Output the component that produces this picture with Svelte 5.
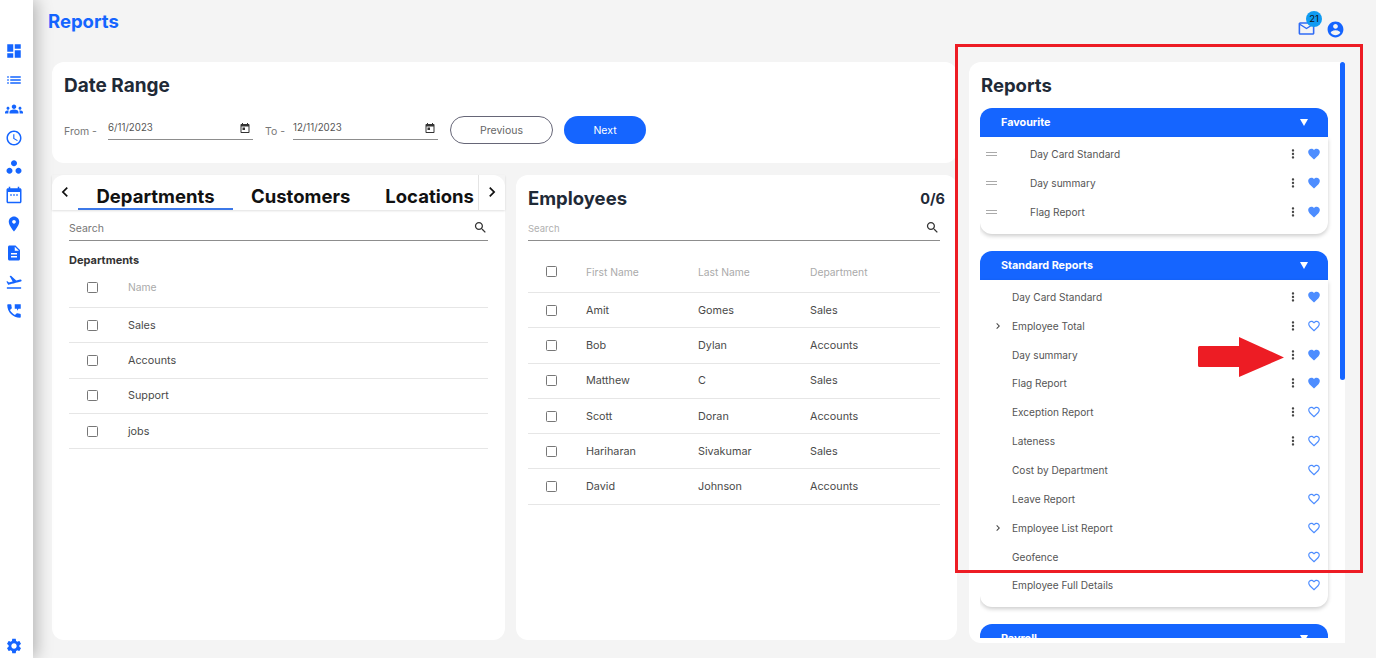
<script>
  const navIcons = [
    "M3 13h8V3H3v10zm0 8h8v-6H3v6zm10 0h8V11h-8v10zm0-18v6h8V3h-8z",
    "M3 13h2v-2H3v2zm0 4h2v-2H3v2zm0-8h2V7H3v2zm4 4h14v-2H7v2zm0 4h14v-2H7v2zM7 7v2h14V7H7z",
    "M12 12.75c1.63 0 3.07.39 4.24.9 1.08.48 1.76 1.56 1.76 2.73V18H6v-1.61c0-1.18.68-2.26 1.76-2.73 1.17-.52 2.61-.91 4.24-.91zM4 13c1.1 0 2-.9 2-2s-.9-2-2-2-2 .9-2 2 .9 2 2 2zm1.13 1.1c-.37-.06-.74-.1-1.13-.1-.99 0-1.93.21-2.78.58C.48 14.9 0 15.62 0 16.43V18h4.5v-1.61c0-.83.23-1.61.63-2.29zM20 13c1.1 0 2-.9 2-2s-.9-2-2-2-2 .9-2 2 .9 2 2 2zm4 3.43c0-.81-.48-1.53-1.22-1.85-.85-.37-1.79-.58-2.78-.58-.39 0-.76.04-1.13.1.4.68.63 1.46.63 2.29V18H24v-1.57zM12 6c1.66 0 3 1.34 3 3s-1.34 3-3 3-3-1.34-3-3 1.34-3 3-3z",
    "M11.99 2C6.47 2 2 6.48 2 12s4.47 10 9.99 10C17.52 22 22 17.52 22 12S17.52 2 11.99 2zM12 20c-4.42 0-8-3.58-8-8s3.58-8 8-8 8 3.58 8 8-3.58 8-8 8zm.5-13H11v6l5.25 3.15.75-1.23-4.5-2.67z",
    "M6 13c-2.2 0-4 1.8-4 4s1.8 4 4 4 4-1.8 4-4-1.8-4-4-4zm6-10C9.8 3 8 4.8 8 7s1.8 4 4 4 4-1.8 4-4-1.8-4-4-4zm6 10c-2.2 0-4 1.8-4 4s1.8 4 4 4 4-1.8 4-4-1.8-4-4-4z",
    "M20 3h-1V1h-2v2H7V1H5v2H4c-1.1 0-2 .9-2 2v16c0 1.1.9 2 2 2h16c1.1 0 2-.9 2-2V5c0-1.1-.9-2-2-2zm0 18H4V8h16v13zM7 11h2v2H7zm4 0h2v2h-2zm4 0h2v2h-2z",
    "M12 2C8.13 2 5 5.13 5 9c0 5.25 7 13 7 13s7-7.75 7-13c0-3.87-3.13-7-7-7zm0 9.5c-1.38 0-2.5-1.12-2.5-2.5s1.12-2.5 2.5-2.5 2.5 1.12 2.5 2.5-1.12 2.5-2.5 2.5z",
    "M14 2H6c-1.1 0-1.99.9-1.99 2L4 20c0 1.1.89 2 1.99 2H18c1.1 0 2-.9 2-2V8l-6-6zm2 16H8v-2h8v2zm0-4H8v-2h8v2zm-3-5V3.5L18.5 9H13z",
    "M2.5 19h19v2h-19v-2zm19.57-9.36c-.21-.8-1.04-1.28-1.84-1.06L14.92 10l-6.9-6.43-1.93.51 4.14 7.17-4.97 1.33-1.97-1.54-1.45.39 2.59 4.49s7.12-1.9 16.57-4.43c.81-.23 1.28-1.05 1.07-1.85z",
    "M20 15.5c-1.25 0-2.45-.2-3.57-.57-.35-.11-.74-.03-1.02.24l-2.2 2.2c-2.83-1.44-5.15-3.75-6.59-6.59l2.2-2.21c.28-.27.36-.66.25-1.01C8.7 6.45 8.5 5.25 8.5 4c0-.55-.45-1-1-1H4c-.55 0-1 .45-1 1 0 9.39 7.61 17 17 17 .55 0 1-.45 1-1v-3.5c0-.55-.45-1-1-1zM13 3h8v6h-3l-2 2.500V9h-3z"
  ];
  const gear = "M19.14 12.94c.04-.3.06-.61.06-.94 0-.32-.02-.64-.07-.94l2.03-1.58c.18-.14.23-.41.12-.61l-1.92-3.32c-.12-.22-.37-.29-.59-.22l-2.39.96c-.5-.38-1.03-.7-1.62-.94l-.36-2.54c-.04-.24-.24-.41-.48-.41h-3.84c-.24 0-.43.17-.47.41l-.36 2.54c-.59.24-1.13.57-1.62.94l-2.39-.96c-.22-.08-.47 0-.59.22L2.74 8.87c-.12.21-.08.47.12.61l2.03 1.58c-.05.3-.09.63-.09.94s.02.64.07.94l-2.03 1.58c-.18.14-.23.41-.12.61l1.92 3.32c.12.22.37.29.59.22l2.39-.96c.5.38 1.03.7 1.62.94l.36 2.54c.05.24.24.41.48.41h3.84c.24 0 .44-.17.47-.41l.36-2.54c.59-.24 1.13-.56 1.62-.94l2.39.96c.22.08.47 0 .59-.22l1.92-3.32c.12-.22.07-.47-.12-.61l-2.01-1.58zM12 15.6c-1.98 0-3.6-1.62-3.6-3.6s1.62-3.6 3.6-3.6 3.6 1.62 3.6 3.6-1.62 3.6-3.6 3.6z";
  const heartFull = "M12 21.35l-1.45-1.32C5.4 15.36 2 12.28 2 8.5 2 5.42 4.42 3 7.5 3c1.74 0 3.41.81 4.5 2.09C13.09 3.81 14.76 3 16.5 3 19.58 3 22 5.42 22 8.5c0 3.78-3.4 6.86-8.55 11.54L12 21.35z";
  const heartLine = "M16.5 3c-1.74 0-3.41.81-4.5 2.09C10.91 3.81 9.24 3 7.5 3 4.42 3 2 5.42 2 8.5c0 3.78 3.4 6.86 8.55 11.54L12 21.35l1.45-1.32C18.6 15.36 22 12.28 22 8.5 22 5.42 19.58 3 16.5 3zm-4.4 15.55l-.1.1-.1-.1C7.14 14.24 4 11.39 4 8.5 4 6.5 5.5 5 7.5 5c1.54 0 3.04.99 3.57 2.36h1.87C13.46 5.99 14.96 5 16.5 5c2 0 3.5 1.5 3.5 3.5 0 2.89-3.14 5.74-7.9 10.05z";
  const searchIcon = "M15.5 14h-.79l-.28-.27C15.41 12.59 16 11.11 16 9.5 16 5.91 13.09 3 9.5 3S3 5.91 3 9.5 5.91 16 9.5 16c1.61 0 3.09-.59 4.23-1.57l.27.28v.79l5 4.99L20.49 19l-4.99-5zm-6 0C7.01 14 5 11.99 5 9.5S7.01 5 9.5 5 14 7.01 14 9.5 11.99 14 9.5 14z";
  const calIcon = "M19 4h-1V2h-2v2H8V2H6v2H5c-1.1 0-2 .9-2 2v14c0 1.1.9 2 2 2h14c1.1 0 2-.9 2-2V6c0-1.1-.9-2-2-2zm0 16H5V9h14v11zM7 11h5v5H7z";
  const dotsIcon = "M12 8c1.1 0 2-.9 2-2s-.9-2-2-2-2 .9-2 2 .9 2 2 2zm0 2c-1.1 0-2 .9-2 2s.9 2 2 2 2-.9 2-2-.9-2-2-2zm0 6c-1.1 0-2 .9-2 2s.9 2 2 2 2-.9 2-2-.9-2-2-2z";
  const chevRight = "M10 6L8.59 7.41 13.17 12l-4.58 4.59L10 18l6-6z";

  const departments = ["Sales", "Accounts", "Support", "jobs"];
  const employees = [
    ["Amit", "Gomes", "Sales"],
    ["Bob", "Dylan", "Accounts"],
    ["Matthew", "C", "Sales"],
    ["Scott", "Doran", "Accounts"],
    ["Hariharan", "Sivakumar", "Sales"],
    ["David", "Johnson", "Accounts"]
  ];
  const favourites = ["Day Card Standard", "Day summary", "Flag Report"];
  const standard = [
    { name: "Day Card Standard", menu: true, fav: true },
    { name: "Employee Total", menu: true, sub: true },
    { name: "Day summary", menu: true, fav: true },
    { name: "Flag Report", menu: true, fav: true },
    { name: "Exception Report", menu: true },
    { name: "Lateness", menu: true },
    { name: "Cost by Department" },
    { name: "Leave Report" },
    { name: "Employee List Report", sub: true },
    { name: "Geofence" },
    { name: "Employee Full Details" }
  ];
</script>

<div class="page">
  <nav class="sidebar">
    <div class="nav-top">
      {#each navIcons as d}
        <svg class="nav-icon" viewBox="0 0 24 24"><path d={d} /></svg>
      {/each}
    </div>
    <svg class="nav-icon" viewBox="0 0 24 24"><path d={gear} /></svg>
  </nav>

  <main class="main">
    <header class="header">
      <h1>Reports</h1>
      <div class="header-icons">
        <div class="mail">
          <svg viewBox="0 0 24 24"><path d="M20 4H4c-1.1 0-2 .9-2 2v12c0 1.1.9 2 2 2h16c1.1 0 2-.9 2-2V6c0-1.1-.9-2-2-2zm0 14H4V8l8 5 8-5v10zm-8-7L4 6h16l-8 5z" /></svg>
          <span class="badge">21</span>
        </div>
        <svg class="user" viewBox="0 0 24 24"><path d="M12 2C6.48 2 2 6.48 2 12s4.48 10 10 10 10-4.48 10-10S17.52 2 12 2zm0 3c1.66 0 3 1.34 3 3s-1.34 3-3 3-3-1.34-3-3 1.34-3 3-3zm0 14.2c-2.5 0-4.71-1.28-6-3.22.03-1.99 4-3.08 6-3.08 1.99 0 5.97 1.09 6 3.08-1.29 1.94-3.5 3.22-6 3.22z" /></svg>
      </div>
    </header>

    <div class="content">
      <div class="left">
        <section class="card date-card">
          <h2>Date Range</h2>
          <div class="date-row">
            <span class="date-label">From -</span>
            <div class="date-field">
              <span>6/11/2023</span>
              <svg viewBox="0 0 24 24"><path d={calIcon} /></svg>
            </div>
            <span class="date-label to">To -</span>
            <div class="date-field">
              <span>12/11/2023</span>
              <svg viewBox="0 0 24 24"><path d={calIcon} /></svg>
            </div>
            <button class="btn prev">Previous</button>
            <button class="btn next">Next</button>
          </div>
        </section>

        <div class="lists">
          <section class="card dept-card">
            <div class="tabs">
              <svg class="chev back" viewBox="0 0 24 24"><path d="M15.41 7.41L14 6l-6 6 6 6 1.41-1.41L10.83 12z" /></svg>
              <div class="tab active">Departments</div>
              <div class="tab">Customers</div>
              <div class="tab last">Locations</div>
              <div class="tab-next">
                <svg class="chev" viewBox="0 0 24 24"><path d={chevRight} /></svg>
              </div>
            </div>
            <div class="dept-body">
              <div class="search">
                <span>Search</span>
                <svg viewBox="0 0 24 24"><path d={searchIcon} /></svg>
              </div>
              <h3>Departments</h3>
              <div class="row dept-head">
                <i class="check"></i>
                <span class="muted">Name</span>
              </div>
              {#each departments as dept}
                <div class="row">
                  <i class="check"></i>
                  <span>{dept}</span>
                </div>
              {/each}
            </div>
          </section>

          <section class="card emp-card">
            <div class="emp-title">
              <h2>Employees</h2>
              <b>0/6</b>
            </div>
            <div class="search light">
              <span>Search</span>
              <svg viewBox="0 0 24 24"><path d={searchIcon} /></svg>
            </div>
            <div class="emp-row emp-head">
              <i class="check"></i>
              <span>First Name</span>
              <span>Last Name</span>
              <span>Department</span>
            </div>
            {#each employees as emp}
              <div class="emp-row">
                <i class="check"></i>
                {#each emp as cell}
                  <span>{cell}</span>
                {/each}
              </div>
            {/each}
          </section>
        </div>
      </div>

      <aside class="card reports">
        <div class="reports-scroll">
          <h2>Reports</h2>

          <div class="group">
            <div class="group-head">
              <span>Favourite</span>
              <i class="caret"></i>
            </div>
            <div class="group-body">
              {#each favourites as name}
                <div class="report">
                  <i class="drag"></i>
                  <span class="report-name">{name}</span>
                  <svg class="dots" viewBox="0 0 24 24"><path d={dotsIcon} /></svg>
                  <svg class="heart" viewBox="0 0 24 24"><path d={heartFull} /></svg>
                </div>
              {/each}
            </div>
          </div>

          <div class="group">
            <div class="group-head">
              <span>Standard Reports</span>
              <i class="caret"></i>
            </div>
            <div class="group-body">
              {#each standard as item}
                <div class="report">
                  <span class="sub">
                    {#if item.sub}
                      <svg viewBox="0 0 24 24"><path d={chevRight} /></svg>
                    {/if}
                  </span>
                  <span class="report-name">{item.name}</span>
                  {#if item.menu}
                    <svg class="dots" viewBox="0 0 24 24"><path d={dotsIcon} /></svg>
                  {/if}
                  <svg class="heart" viewBox="0 0 24 24"><path d={item.fav ? heartFull : heartLine} /></svg>
                </div>
              {/each}
            </div>
          </div>

          <div class="group">
            <div class="group-head">
              <span>Payroll</span>
              <i class="caret"></i>
            </div>
          </div>
        </div>

        <div class="scrollbar"></div>
      </aside>
    </div>
  </main>

  <!-- annotation drawn on top of the screenshot -->
  <div class="red-box"></div>
  <svg class="red-arrow" viewBox="0 0 86 41"><path d="M1.500 9H41V0l45 20.500L41 40V30H1.500A1.500 1.500 0 0 1 0 28.500V10.500A1.500 1.500 0 0 1 1.500 9z" /></svg>
</div>

<style>
  :global(body) {
    margin: 0;
    background: #f4f4f4;
    overflow: hidden;
  }

  .page {
    position: relative;
    display: flex;
    width: 1376px;
    height: 658px;
    overflow: hidden;
    font-family: Inter, "Open Sans", "Liberation Sans", sans-serif;
    color: #4a4a4a;
    font-size: 10.8px;
    background: #f4f4f4;
  }

  .sidebar {
    width: 33px;
    flex: none;
    background: #fff;
    box-shadow: 4px 0 16px rgba(0, 0, 0, 0.25);
    display: flex;
    flex-direction: column;
    justify-content: space-between;
    align-items: center;
    padding: 42px 5px 3px 0;
    box-sizing: border-box;
    z-index: 1;
  }

  .nav-top {
    display: flex;
    flex-direction: column;
    gap: 10.9px;
  }

  .nav-icon {
    width: 18px;
    height: 18px;
    display: block;
    fill: #1565ff;
  }

  .main {
    flex: 1;
    padding-left: 19px;
    min-width: 0;
  }

  .header {
    height: 62px;
    display: flex;
    justify-content: space-between;
    width: 1293px;
  }

  h1 {
    margin: 9px 0 0 -4px;
    font-size: 18.5px;
    line-height: 24px;
    font-weight: 700;
    color: #1565ff;
  }

  .header-icons {
    display: flex;
    align-items: flex-start;
    gap: 10px;
    padding-top: 20px;
  }

  .mail {
    position: relative;
    width: 19px;
    height: 19px;
    margin-top: -1px;
  }

  .mail svg {
    display: block;
    width: 19px;
    height: 19px;
    fill: #2f6bf5;
  }

  .badge {
    position: absolute;
    left: 9px;
    top: -8px;
    width: 16px;
    height: 16px;
    border-radius: 50%;
    background: #0f9bf2;
    color: #111;
    font-size: 9.5px;
    line-height: 16px;
    text-align: center;
  }

  .user {
    width: 19px;
    height: 19px;
    fill: #1565ff;
  }

  .content {
    display: grid;
    grid-template-columns: 905px 376px;
    gap: 12px;
  }

  .left {
    display: flex;
    flex-direction: column;
    gap: 12px;
  }

  .card {
    background: #fff;
    border-radius: 12px;
    box-sizing: border-box;
  }

  h2 {
    margin: 0;
    font-size: 18.5px;
    line-height: 24px;
    font-weight: 700;
    color: #1f2a37;
  }

  .date-card {
    height: 101px;
    padding: 12px 12px 0;
  }

  .date-card h2 {
    font-size: 19px;
  }

  .date-row {
    display: flex;
    align-items: center;
    margin-top: 18px;
  }

  .date-label {
    color: #777;
    font-size: 10.5px;
    width: 44px;
    padding-top: 2px;
  }

  .date-label.to {
    width: 28px;
  }

  .date-field {
    width: 145px;
    height: 22px;
    box-sizing: border-box;
    border-bottom: 1px solid #8d8d8d;
    display: flex;
    justify-content: space-between;
    align-items: center;
    padding: 0 2px 1px 0;
    margin: 0 12px 3px 0;
    color: #555;
    font-size: 9.7px;
  }

  .date-field svg {
    width: 12px;
    height: 12px;
    fill: #333;
  }

  .btn {
    width: 103px;
    height: 28px;
    border-radius: 14px;
    font: inherit;
    font-size: 10.5px;
    padding: 0;
  }

  .prev {
    background: #fff;
    border: 1px solid #667;
    color: #666;
    margin-right: 11px;
  }

  .next {
    width: 82px;
    background: #1565ff;
    border: none;
    color: #fff;
  }

  .lists {
    display: grid;
    grid-template-columns: 453px 441px;
    gap: 11px;
    height: 465px;
  }

  .tabs {
    display: flex;
    align-items: stretch;
    height: 35px;
    box-shadow: 0 1px 2px rgba(0, 0, 0, 0.12);
    font-size: 18.5px;
    font-weight: 700;
    color: #111;
  }

  .chev {
    width: 20px;
    height: 20px;
    fill: #111;
    flex: none;
    display: block;
  }

  .chev.back {
    margin: 7px 3px 0 3px;
  }

  .tab {
    flex: none;
    padding: 8.500px 17px 0 18px;
    line-height: 24px;
    white-space: nowrap;
  }

  .tab.active {
    width: 155px;
    padding: 8.500px 0 0;
    text-align: center;
    border-bottom: 2px solid #3c78e8;
    box-sizing: border-box;
  }

  .tab.last {
    padding-right: 0;
  }

  .tab-next {
    flex: none;
    margin-left: auto;
    width: 27px;
    border-left: 1px solid #e4e4e4;
    padding: 7px 0 0 3px;
    box-sizing: border-box;
  }

  .dept-body {
    padding: 3px 17px 0;
  }

  .search {
    height: 28px;
    border-bottom: 1px solid #8d8d8d;
    display: flex;
    justify-content: space-between;
    align-items: center;
    box-sizing: border-box;
    color: #777;
    padding: 4px 0 0 0;
    font-size: 10.5px;
  }

  .search svg {
    width: 15px;
    height: 15px;
    fill: #333;
    margin-top: -2px;
  }

  h3 {
    margin: 12px 0 0;
    font-size: 11px;
    line-height: 14px;
    font-weight: 700;
    color: #333;
  }

  .row {
    display: flex;
    align-items: center;
    height: 35.3px;
    box-sizing: border-box;
    border-bottom: 1px solid #e6e6e6;
    padding-left: 18px;
    gap: 30px;
  }

  .dept-head {
    height: 41px;
  }

  .muted {
    color: #aaa;
    font-size: 10.3px;
  }

  .check {
    width: 9px;
    height: 9px;
    border: 1.5px solid #777;
    border-radius: 1.5px;
    flex: none;
    display: block;
  }

  .emp-card {
    padding: 11px 12px 0;
  }

  .emp-title {
    display: flex;
    justify-content: space-between;
    align-items: center;
    height: 24px;
  }

  .emp-title b {
    font-size: 14.5px;
    color: #1f2a37;
  }

  .search.light {
    margin: 3px 5px 0 0;
    color: #b0b0b0;
    font-size: 9.5px;
  }

  .emp-row {
    display: grid;
    grid-template-columns: 40px 112px 112px 1fr;
    align-items: center;
    height: 35.3px;
    margin-right: 5px;
    padding-left: 18px;
    border-bottom: 1px solid #e6e6e6;
    box-sizing: border-box;
  }

  .emp-head {
    height: 52px;
    padding-top: 10px;
    color: #aaa;
    font-size: 10.3px;
  }

  .reports {
    position: relative;
    height: 581px;
    padding: 0 0 5px 11px;
    border-radius: 12px 0 0 12px;
  }

  .reports-scroll {
    height: 100%;
    overflow: hidden;
    padding-top: 11px;
    box-sizing: border-box;
  }

  .reports h2 {
    margin: 0 0 11px 1px;
  }

  .group {
    width: 348px;
    margin-bottom: 17px;
  }

  .group-head {
    height: 29px;
    background: #1565ff;
    border-radius: 12px 12px 0 0;
    color: #fff;
    font-weight: 700;
    font-size: 10.8px;
    display: flex;
    justify-content: space-between;
    align-items: center;
    padding: 0 20px 0 21px;
  }

  .caret {
    width: 0;
    height: 0;
    border-left: 4.500px solid transparent;
    border-right: 4.500px solid transparent;
    border-top: 7px solid #fff;
  }

  .group-body {
    background: #fff;
    border-radius: 0 0 12px 12px;
    box-shadow: 0 2px 4px rgba(0, 0, 0, 0.2);
    padding: 3px 0 7px;
  }

  .report {
    display: flex;
    align-items: center;
    height: 28.85px;
    padding-right: 7px;
  }

  .drag {
    width: 11px;
    height: 2px;
    margin: 0 33px 0 6px;
    border-top: 1px solid #aaa;
    border-bottom: 1px solid #aaa;
    flex: none;
  }

  .sub {
    width: 32px;
    flex: none;
    display: flex;
    justify-content: flex-end;
    padding-right: 8px;
    box-sizing: border-box;
  }

  .sub svg {
    width: 12px;
    height: 12px;
    fill: #444;
  }

  .report-name {
    flex: 1;
    color: #555;
    font-size: 10.1px;
  }

  .dots {
    width: 14px;
    height: 14px;
    fill: #444;
    margin-right: 7px;
  }

  .heart {
    width: 14px;
    height: 14px;
    fill: #4d8dff;
  }

  .scrollbar {
    position: absolute;
    top: 0;
    right: 0;
    width: 5px;
    height: 318px;
    background: #1565ff;
    border-radius: 3px;
  }

  .red-box {
    position: absolute;
    left: 955px;
    top: 44px;
    width: 408px;
    height: 529px;
    box-sizing: border-box;
    border: 3px solid #ed1c24;
  }

  .red-arrow {
    position: absolute;
    left: 1198px;
    top: 337px;
    width: 86px;
    height: 41px;
    fill: #ed1c24;
  }
</style>
